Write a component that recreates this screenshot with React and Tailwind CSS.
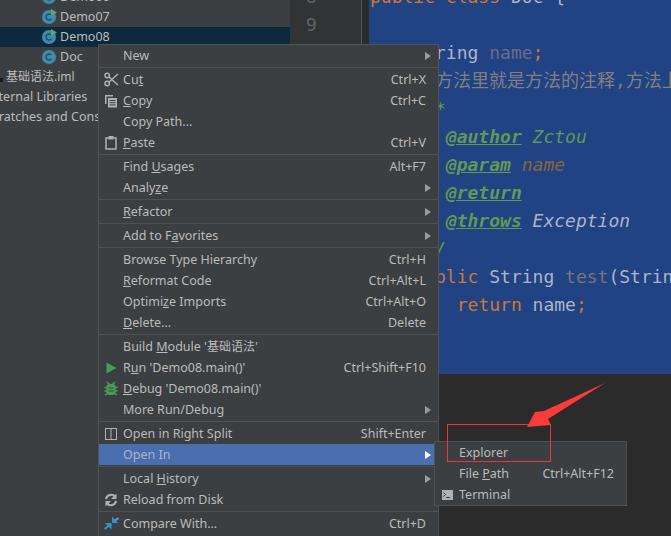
import React from "react";

const sans = "font-['Noto_Sans','Noto_Sans_CJK_SC',sans-serif]";

const Scissors = () => (
  <svg width="15" height="15" viewBox="0 0 15 15" fill="none" stroke="#afb1b3" strokeWidth="1.5">
    <circle cx="3.2" cy="3.5" r="2.2" />
    <circle cx="3.2" cy="11.5" r="2.2" />
    <path d="M5 5L14 13M5 10L14 2" />
  </svg>
);
const CopyIcon = () => (
  <svg width="14" height="14" viewBox="0 0 14 14" fill="none">
    <path d="M1 1h8v1.5H2.5V10H1z" fill="#afb1b3" />
    <path d="M4 4h9v9.5H4z" fill="#afb1b3" />
    <path d="M5.5 6.5h6M5.5 8.7h6M5.5 10.9h6" stroke="#3c3f41" strokeWidth="1" />
  </svg>
);
const PasteIcon = () => (
  <svg width="12" height="15" viewBox="0 0 12 15" fill="none">
    <path d="M1 3h10v11H1z" stroke="#afb1b3" strokeWidth="1.5" />
    <path d="M3.5 1h5v3.5h-5z" fill="#afb1b3" />
  </svg>
);
const RunIcon = () => (
  <svg width="11" height="12" viewBox="0 0 11 12"><path d="M0.5 0.5L10.5 6L0.5 11.5z" fill="#499c54" /></svg>
);
const DebugIcon = () => (
  <svg width="14" height="15" viewBox="0 0 14 15" fill="none">
    <path d="M3 1l2.5 2.5M11 1L8.5 3.5M0.5 6.5h2M11.5 6.5h2M0.5 10h2M11.5 10h2M1 14l2-1.5M13 14l-2-1.5" stroke="#499c54" strokeWidth="1.5" />
    <rect x="2.2" y="3" width="9.6" height="11" rx="3.5" fill="#499c54" />
    <path d="M4.5 7h5M4.5 10h5" stroke="#3c3f41" strokeWidth="1" />
  </svg>
);
const SplitIcon = () => (
  <svg width="12" height="12" viewBox="0 0 12 12" fill="none" stroke="#afb1b3" strokeWidth="1">
    <rect x="0.5" y="0.5" width="11" height="11" />
    <path d="M6 0.5V11.5" />
  </svg>
);
const ReloadIcon = () => (
  <svg width="14" height="14" viewBox="0 0 14 14" fill="none">
    <path d="M2 6.2A5.2 5.2 0 0 1 11 3.5" stroke="#afb1b3" strokeWidth="2" />
    <path d="M12.5 0.5V6H7z" fill="#afb1b3" />
    <path d="M12 7.8A5.2 5.2 0 0 1 3 10.5" stroke="#afb1b3" strokeWidth="2" />
    <path d="M1.5 13.5V8H7z" fill="#afb1b3" />
  </svg>
);
const CompareIcon = () => (
  <svg width="15" height="15" viewBox="0 0 15 15" fill="none">
    <path d="M6.5 8.5L0.5 13" stroke="#3592c4" strokeWidth="2" />
    <path d="M1 8h6.5v6.5z" fill="#3592c4" transform="translate(0 -1)" />
    <path d="M8.5 6.5L14.5 2" stroke="#6f9fc0" strokeWidth="2" />
    <path d="M8 0.5V7H14z" fill="#3592c4" />
  </svg>
);
const TerminalIcon = () => (
  <svg width="11" height="10" viewBox="0 0 11 10">
    <rect width="11" height="10" fill="#afb1b3" />
    <path d="M1.5 2.5L3.5 4.5L1.5 6.5M4 7.5h4" stroke="#3c3f41" strokeWidth="1" fill="none" />
  </svg>
);
const ClassIcon = ({ run }) => (
  <span className="relative block w-[14px] h-[14px] shrink-0">
    <svg width="14" height="14" viewBox="0 0 14 14">
      <circle cx="7" cy="7" r="7" fill="#3d8bad" />
      <path d="M9.3 5A3 3 0 1 0 9.3 9" stroke="#2b4a5c" strokeWidth="1.4" fill="none" />
    </svg>
    {run && (
      <svg className="absolute -top-[1px] -right-[1px]" width="6" height="7" viewBox="0 0 6 7">
        <path d="M0 0L6 3.5L0 7z" fill="#59a869" />
      </svg>
    )}
  </span>
);

const Sep = () => (
  <div className="h-[3px] flex items-center">
    <div className="w-full h-px bg-[#515151]" />
  </div>
);

const Row = ({ icon, children, sc, sub, active }) => (
  <div className={`h-[21px] flex items-center text-[12.5px] leading-none ${active ? "bg-[#4b6eaf] text-[#a9b4c8]" : "text-[#bbbbbb]"}`}>
    <span className="w-[24px] shrink-0 flex items-center justify-center">{icon}</span>
    <span className="whitespace-pre flex-1 pt-[2px]">{children}</span>
    {sc && <span className="pr-[12px] pt-[2px] text-[#bbbbbb]">{sc}</span>}
    {sub && (
      <span className="pr-[7px]">
        <span className={`block w-0 h-0 border-y-[4px] border-y-transparent border-l-[6px] ${active ? "border-l-white" : "border-l-[#9a9c9e]"}`} />
      </span>
    )}
  </div>
);

const Line = ({ children }) => <div className="h-[28px] whitespace-pre leading-[28px]">{children}</div>;

export default function App() {
  return (
    <div className={`relative w-[671px] h-[536px] overflow-hidden bg-[#2b2b2b] flex ${sans}`}>
      {/* project tree */}
      <div className="w-[290px] shrink-0 bg-[#3c3f41] text-[12.5px] text-[#bbbbbb] -mt-[13px] h-[549px]">
        {[
          ["Demo06", false],
          ["Demo07", false],
          ["Demo08", true],
          ["Doc", false],
        ].map(([n, sel]) => (
          <div key={n} className={`h-[20px] flex items-center pl-[42px] gap-[4px] ${sel ? "bg-[#0d293e]" : ""}`}>
            <ClassIcon run={n !== "Doc"} />
            <span>{n}</span>
          </div>
        ))}
        <div className="h-[20px] flex items-center text-[12px]">
          <span className="w-[3px] h-[4px] mt-[6px] mr-[3px] bg-[#1b1b1b]" />
          基础语法.iml
        </div>
        <div className="h-[20px] flex items-center -ml-[15px] whitespace-nowrap">External Libraries</div>
        <div className="h-[20px] flex items-center -ml-[14px] whitespace-nowrap">Scratches and Consoles</div>
      </div>

      {/* gutter */}
      <div className="w-[72px] shrink-0 bg-[#313335] border-r border-[#555555] font-['DejaVu_Sans_Mono',monospace] text-[18px] text-[#606366] -mt-[17px] h-[553px] pl-[16px]">
        <Line>8</Line>
        <Line>9</Line>
      </div>

      {/* editor */}
      <div className="flex-1 min-w-0 h-full flex flex-col">
        <div className="h-[374px] ml-[7px] bg-[#214283] overflow-hidden font-['DejaVu_Sans_Mono','Noto_Sans_CJK_SC',monospace] text-[18px] text-[#a9b7c6]">
          <div className="-mt-[17px] pl-px">
            <Line><span className="text-[#cc7832]">public class </span>Doc {"{"}</Line>
            <Line> </Line>
            <Line>{"    "}String <span className="text-[#6e6a88]">name</span><span className="text-[#cc7832]">;</span></Line>
            <Line><span className="text-[#808080]">{"    //方法里就是方法的注释,方法上面的"}</span></Line>
            <Line><span className="text-[#629755]">{"    /**"}</span></Line>
            <Line><span className="text-[#629755] italic">{"     * "}<b className="underline">@author</b> Zctou</span></Line>
            <Line><span className="text-[#629755] italic">{"     * "}<b className="underline">@param</b> <span className="text-[#8a653b]">name</span></span></Line>
            <Line><span className="text-[#629755] italic">{"     * "}<b className="underline">@return</b></span></Line>
            <Line><span className="text-[#629755] italic">{"     * "}<b className="underline">@throws</b> <span className="text-[#a9b7c6]">Exception</span></span></Line>
            <Line><span className="text-[#629755]">{"     */"}</span></Line>
            <Line>{"    "}<span className="text-[#cc7832]">public </span>String <span className="text-[#777777]">test</span>(String</Line>
            <Line>{"        "}<span className="text-[#cc7832]">return </span>name<span className="text-[#cc7832]">;</span></Line>
          </div>
        </div>
      </div>

      {/* context menu */}
      <div className="absolute left-[98px] top-[44px] w-[341px] h-[500px] bg-[#3c3f41] border border-[#515151]">
        <Row sub>New</Row>
        <Sep />
        <Row icon={<Scissors />} sc="Ctrl+X">Cu<u>t</u></Row>
        <Row icon={<CopyIcon />} sc="Ctrl+C"><u>C</u>opy</Row>
        <Row>Copy Path...</Row>
        <Row icon={<PasteIcon />} sc="Ctrl+V"><u>P</u>aste</Row>
        <Sep />
        <Row sc="Alt+F7">Find <u>U</u>sages</Row>
        <Row sub>Analy<u>z</u>e</Row>
        <Sep />
        <Row sub><u>R</u>efactor</Row>
        <Sep />
        <Row sub>Add to F<u>a</u>vorites</Row>
        <Sep />
        <Row sc="Ctrl+H">Browse Type Hierarchy</Row>
        <Row sc="Ctrl+Alt+L"><u>R</u>eformat Code</Row>
        <Row sc="Ctrl+Alt+O">Optimi<u>z</u>e Imports</Row>
        <Row sc="Delete"><u>D</u>elete...</Row>
        <Sep />
        <Row>Build <u>M</u>odule '<span className="text-[12px]">基础语法</span>'</Row>
        <Row icon={<RunIcon />} sc="Ctrl+Shift+F10">R<u>u</u>n 'Demo08.main()'</Row>
        <Row icon={<DebugIcon />}><u>D</u>ebug 'Demo08.main()'</Row>
        <Row sub>More Run/Debug</Row>
        <Sep />
        <Row icon={<SplitIcon />} sc="Shift+Enter">Open in Right Split</Row>
        <Row active sub>Open In</Row>
        <Sep />
        <Row sub>Local <u>H</u>istory</Row>
        <Row icon={<ReloadIcon />}>Reload from Disk</Row>
        <Sep />
        <Row icon={<CompareIcon />} sc="Ctrl+D">Compare With...</Row>
      </div>

      {/* submenu */}
      <div className="absolute left-[434px] top-[441px] w-[193px] h-[65px] bg-[#3c3f41] border border-[#515151]">
        <Row>Explorer</Row>
        <Row sc="Ctrl+Alt+F12">File <u>P</u>ath</Row>
        <Row icon={<TerminalIcon />}>Terminal</Row>
      </div>

      {/* annotation */}
      <div className="absolute left-[447px] top-[424px] w-[104px] h-[38px] border border-[#f03535]" />
      <svg className="absolute left-[520px] top-[378px]" width="90" height="54" viewBox="0 0 90 54">
        <path d="M85 5L24 33L15 34L7 49L31 47L28 41z" fill="#fb3a3a" />
      </svg>
    </div>
  );
}
